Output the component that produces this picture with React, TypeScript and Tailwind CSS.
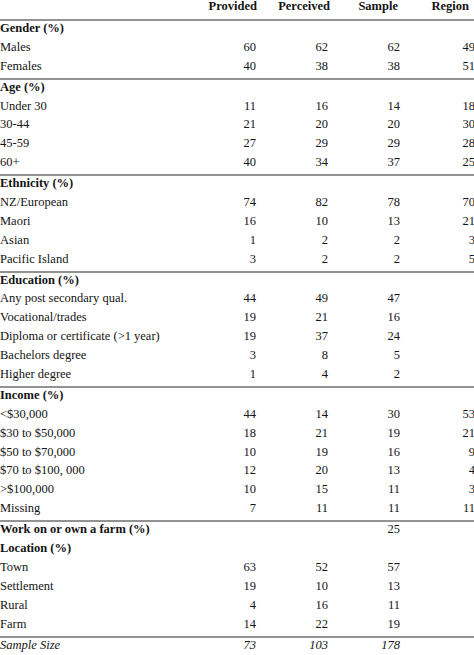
import React from 'react';

type Row = { label: string; vals: string[]; bold?: boolean; italic?: boolean };

const sections: Row[][] = [
  [
    { label: 'Gender (%)', vals: [], bold: true },
    { label: 'Males', vals: ['60', '62', '62', '49'] },
    { label: 'Females', vals: ['40', '38', '38', '51'] },
  ],
  [
    { label: 'Age (%)', vals: [], bold: true },
    { label: 'Under 30', vals: ['11', '16', '14', '18'] },
    { label: '30-44', vals: ['21', '20', '20', '30'] },
    { label: '45-59', vals: ['27', '29', '29', '28'] },
    { label: '60+', vals: ['40', '34', '37', '25'] },
  ],
  [
    { label: 'Ethnicity (%)', vals: [], bold: true },
    { label: 'NZ/European', vals: ['74', '82', '78', '70'] },
    { label: 'Maori', vals: ['16', '10', '13', '21'] },
    { label: 'Asian', vals: ['1', '2', '2', '3'] },
    { label: 'Pacific Island', vals: ['3', '2', '2', '5'] },
  ],
  [
    { label: 'Education (%)', vals: [], bold: true },
    { label: 'Any post secondary qual.', vals: ['44', '49', '47', ''] },
    { label: 'Vocational/trades', vals: ['19', '21', '16', ''] },
    { label: 'Diploma or certificate (>1 year)', vals: ['19', '37', '24', ''] },
    { label: 'Bachelors degree', vals: ['3', '8', '5', ''] },
    { label: 'Higher degree', vals: ['1', '4', '2', ''] },
  ],
  [
    { label: 'Income (%)', vals: [], bold: true },
    { label: '<$30,000', vals: ['44', '14', '30', '53'] },
    { label: '$30 to $50,000', vals: ['18', '21', '19', '21'] },
    { label: '$50 to $70,000', vals: ['10', '19', '16', '9'] },
    { label: '$70 to $100, 000', vals: ['12', '20', '13', '4'] },
    { label: '>$100,000', vals: ['10', '15', '11', '3'] },
    { label: 'Missing', vals: ['7', '11', '11', '11'] },
  ],
  [
    { label: 'Work on or own a farm (%)', vals: ['', '', '25', ''], bold: true },
    { label: 'Location (%)', vals: [], bold: true },
    { label: 'Town', vals: ['63', '52', '57', ''] },
    { label: 'Settlement', vals: ['19', '10', '13', ''] },
    { label: 'Rural', vals: ['4', '16', '11', ''] },
    { label: 'Farm', vals: ['14', '22', '19', ''] },
  ],
  [{ label: 'Sample Size', vals: ['73', '103', '178', ''], italic: true }],
];

const TableRow = ({ row }: { row: Row }) => (
  <div
    className={`grid h-[18.9px] grid-cols-[200px_56px_72px_72px_75px] leading-[14px] ${
      row.italic ? 'italic' : ''
    }`}
  >
    <div className={row.bold ? 'font-bold' : ''}>{row.label}</div>
    {[0, 1, 2, 3].map((i) => (
      <div key={i} className="text-right">
        {row.vals[i] ?? ''}
      </div>
    ))}
  </div>
);

export default function App() {
  return (
    <div className="w-[474px] h-[655px] overflow-hidden bg-white text-[12.5px] text-[#141414] font-['Liberation_Serif','Times_New_Roman',serif]">
      <div className="w-[480px]">
        <div className="grid h-[21px] grid-cols-[200px_57px_73px_68px_71px] border-b-2 border-[#939393] font-bold leading-[13px]">
          <div />
          <div className="text-right">Provided</div>
          <div className="text-right">Perceived</div>
          <div className="text-right">Sample</div>
          <div className="text-right">Region</div>
        </div>
        {sections.map((rows, si) => (
          <div key={si} className={si > 0 ? 'border-t-2 border-[#939393]' : ''}>
            {rows.map((row) => (
              <TableRow key={row.label} row={row} />
            ))}
          </div>
        ))}
      </div>
    </div>
  );
}
